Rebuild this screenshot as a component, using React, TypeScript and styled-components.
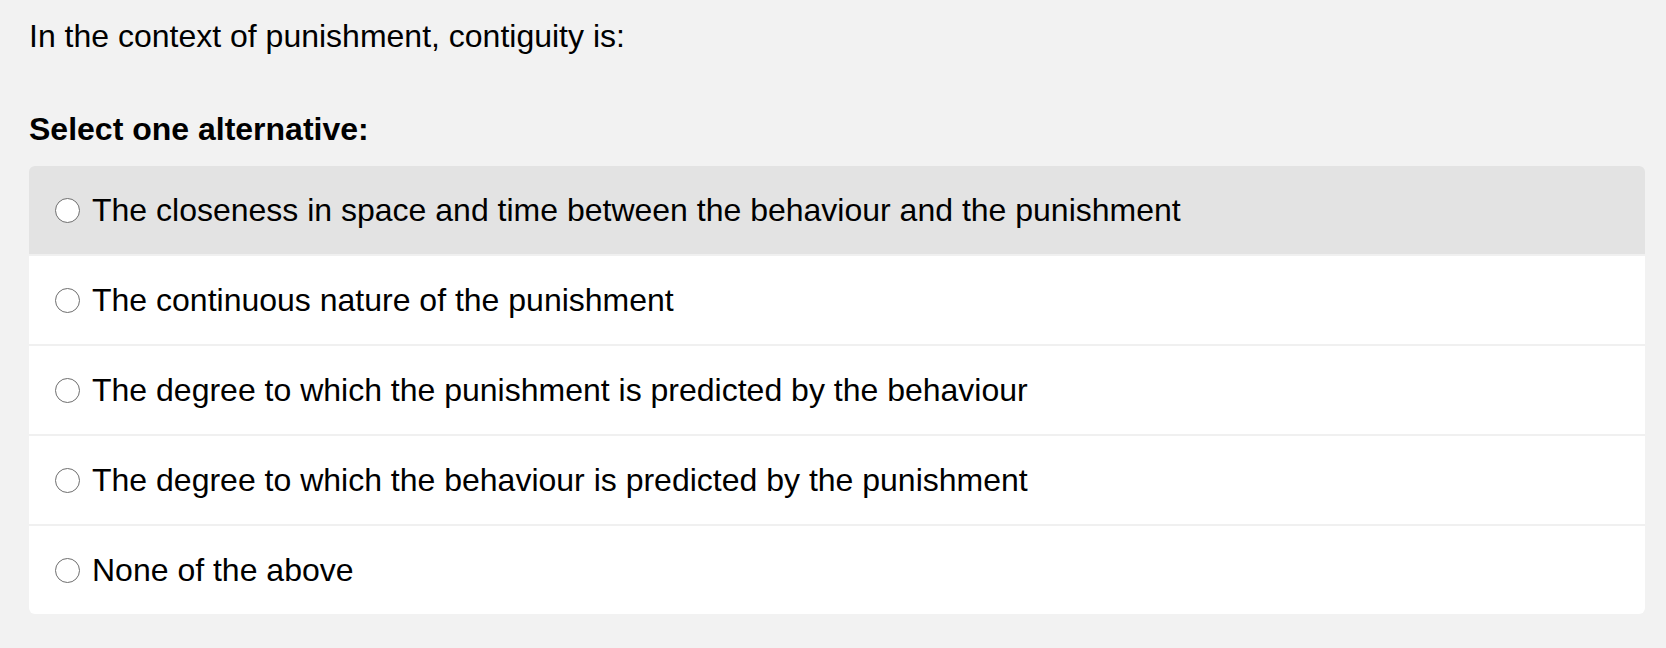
import React from "react";
import styled, { createGlobalStyle } from "styled-components";

const Global = createGlobalStyle`
  html, body { margin: 0; padding: 0; background: #f2f2f2; }
  body { font-family: "Liberation Sans", Arial, Helvetica, sans-serif; color: #000; }
`;

const Page = styled.div`
  padding: 18px 21px 0 29px;
`;

const Question = styled.p`
  margin: 0;
  font-size: 32px;
  line-height: 37px;
`;

const Prompt = styled.p`
  margin: 56px 0 18px;
  font-size: 32px;
  line-height: 37px;
  font-weight: bold;
`;

const List = styled.div`
  display: flex;
  flex-direction: column;
  gap: 2px;
  background: #f0f0f0;
  border-radius: 6px;
  overflow: hidden;
`;

const Row = styled.label<{ $hover?: boolean }>`
  display: flex;
  align-items: center;
  gap: 12px;
  height: 88px;
  padding: 0 26px;
  background: ${(p) => (p.$hover ? "#e3e3e3" : "#ffffff")};
  font-size: 32px;
  cursor: pointer;
`;

const Radio = styled.span`
  box-sizing: border-box;
  width: 25px;
  height: 25px;
  border-radius: 50%;
  border: 1.5px solid #6e6e6e;
  background: #fff;
  flex: none;
`;

const options = [
  "The closeness in space and time between the behaviour and the punishment",
  "The continuous nature of the punishment",
  "The degree to which the punishment is predicted by the behaviour",
  "The degree to which the behaviour is predicted by the punishment",
  "None of the above",
];

export default function App() {
  return (
    <Page>
      <Global />
      <Question>In the context of punishment, contiguity is:</Question>
      <Prompt>Select one alternative:</Prompt>
      <List>
        {options.map((o, i) => (
          <Row key={i} $hover={i === 0}>
            <Radio />
            <span>{o}</span>
          </Row>
        ))}
      </List>
    </Page>
  );
}
